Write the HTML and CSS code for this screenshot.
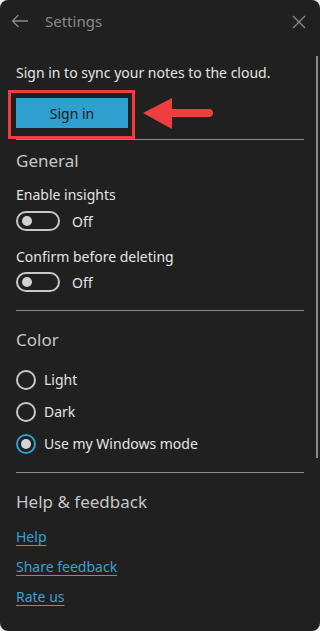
FILE: index.html
```html
<!DOCTYPE html>
<html>
<head>
<meta charset="utf-8">
<link rel="stylesheet" href="styles.css">
</head>
<body>
<div class="window">
  <div class="header">
    <svg class="back" width="18" height="14" viewBox="0 0 18 14"><path d="M17 7H1.5M7.5 1L1.5 7l6 6" fill="none" stroke="#8a8a8a" stroke-width="1.3"/></svg>
    <span class="title">Settings</span>
    <svg class="close" width="14" height="14" viewBox="0 0 14 14"><path d="M1 1l12 12M13 1L1 13" fill="none" stroke="#8a8a8a" stroke-width="1.3"/></svg>
  </div>
  <div class="content">
    <p class="intro">Sign in to sync your notes to the cloud.</p>
    <div class="signin-wrap">
      <button class="signin">Sign in</button>
      <div class="highlight"></div>
      <svg class="arrow" width="74" height="32" viewBox="0 0 74 32"><path d="M0 15L29 0V11H66a4 4 0 0 1 0 8H29V31Z" fill="#f03e3e"/></svg>
    </div>
    <hr class="divider first">
    <h2 class="heading">General</h2>
    <div class="label">Enable insights</div>
    <div class="toggle-row"><span class="toggle"><span class="knob"></span></span><span class="state">Off</span></div>
    <div class="label second">Confirm before deleting</div>
    <div class="toggle-row tight"><span class="toggle"><span class="knob"></span></span><span class="state">Off</span></div>
    <hr class="divider">
    <h2 class="heading">Color</h2>
    <div class="radios">
      <div class="radio-row"><span class="radio"></span><span>Light</span></div>
      <div class="radio-row"><span class="radio"></span><span>Dark</span></div>
      <div class="radio-row"><span class="radio checked"><span class="dot"></span></span><span>Use my Windows mode</span></div>
    </div>
    <hr class="divider">
    <h2 class="heading">Help &amp; feedback</h2>
    <div class="links">
      <a href="#">Help</a>
      <a href="#">Share feedback</a>
      <a href="#">Rate us</a>
    </div>
  </div>
  <div class="scrollbar"></div>
</div>
</body>
</html>
```
FILE: styles.css
```css
html, body { margin: 0; padding: 0; background: #f2f2f2; }
body { width: 320px; height: 631px; overflow: hidden; font-family: "Noto Sans", "Open Sans", sans-serif; }
.window { position: relative; width: 320px; height: 631px; background: #202020; border-radius: 8px; color: #e4e4e4; box-sizing: border-box; }
.header { height: 42px; display: flex; align-items: center; padding: 0 14px 0 11px; }
.back { margin-top: -1px; }
.title { margin-left: 16px; font-size: 15px; color: #8a8a8a; flex: 1; }
.close { margin-top: 1px; }
.content { padding: 0 16px; display: flex; flex-direction: column; }
.intro { margin: 21px 0 0; font-size: 14px; line-height: 20px; }
.signin-wrap { position: relative; margin-top: 15px; height: 30px; }
.signin { width: 112px; height: 30px; background: #2f9fcf; border: none; color: #1b1b1b; font-family: inherit; font-size: 14px; padding: 0; display: block; }
.highlight { position: absolute; left: -8px; top: -8px; width: 121px; height: 43px; border: 3px solid #f03e3e; }
.arrow { position: absolute; left: 127px; top: 0px; }
.divider { border: none; height: 1px; background: #8a8a8a; margin: 18px 0 0; width: 100%; }
.divider.first { margin-top: 11px; }
.heading { margin: 8px 0 0; font-size: 17px; font-weight: 400; line-height: 24px; color: #c6c6c6; }
.divider + .heading { margin-top: 17px; }
.divider.first + .heading { margin-top: 9px; }
.label { margin-top: 12px; font-size: 14px; line-height: 20px; }
.label.second { margin-top: 16px; }
.toggle-row { margin-top: 6px; display: flex; align-items: center; gap: 12px; font-size: 14px; }
.toggle-row.tight { margin-top: 5px; }
.toggle { width: 44px; height: 20px; box-sizing: border-box; border: 2px solid #c8c8c8; border-radius: 10px; display: flex; align-items: center; padding-left: 4px; }
.knob { width: 10px; height: 10px; border-radius: 50%; background: #d0d0d0; }
.radios { margin-top: 18px; display: flex; flex-direction: column; gap: 12px; }
.radio-row { display: flex; align-items: center; gap: 8px; font-size: 14px; line-height: 20px; }
.radio { width: 20px; height: 20px; box-sizing: border-box; border: 2px solid #c8c8c8; border-radius: 50%; display: flex; align-items: center; justify-content: center; }
.radio.checked { border-color: #2f9fcf; }
.dot { width: 10px; height: 10px; border-radius: 50%; background: #d4d4d4; }
.links { margin-top: 13px; display: flex; flex-direction: column; gap: 10px; align-items: flex-start; }
.links a { color: #3aa0d2; font-size: 14px; line-height: 20px; text-decoration: underline; text-underline-offset: 3px; }
.scrollbar { position: absolute; right: 2px; top: 56px; width: 2px; height: 402px; background: #8a8a8a; }
```
